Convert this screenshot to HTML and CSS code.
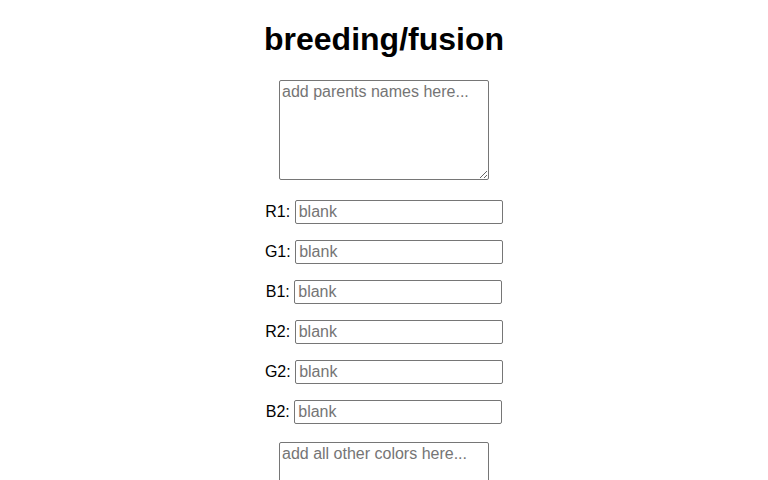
FILE: index.html
```html
<!DOCTYPE html>
<html lang="en">
<head>
<meta charset="utf-8">
<title>breeding/fusion</title>
<link rel="stylesheet" href="styles.css">
</head>
<body>
<h1 class="title">breeding/fusion</h1>
<div class="block">
  <textarea class="area" placeholder="add parents names here..."></textarea>
</div>
<p class="row"><label for="r1">R1:</label> <input id="r1" class="field" type="text" placeholder="blank"></p>
<p class="row"><label for="g1">G1:</label> <input id="g1" class="field" type="text" placeholder="blank"></p>
<p class="row"><label for="b1">B1:</label> <input id="b1" class="field" type="text" placeholder="blank"></p>
<p class="row"><label for="r2">R2:</label> <input id="r2" class="field" type="text" placeholder="blank"></p>
<p class="row"><label for="g2">G2:</label> <input id="g2" class="field" type="text" placeholder="blank"></p>
<p class="row"><label for="b2">B2:</label> <input id="b2" class="field" type="text" placeholder="blank"></p>
<div class="block block-last">
  <textarea class="area" placeholder="add all other colors here..."></textarea>
</div>
</body>
</html>
```
FILE: styles.css
```css
body {
  margin: 0 8px 8px;
  font-family: "Liberation Sans", Arial, sans-serif;
  font-size: 16px;
  color: #000;
  background: #fff;
  text-align: center;
}

.title {
  font-size: 32px;
  font-weight: bold;
  margin: 21.44px 0;
}

.block {
  height: 104px;
}

.block-last {
  margin-top: 18px;
}

.area {
  box-sizing: border-box;
  width: 210px;
  height: 100px;
  padding: 2px;
  border: 1px solid #767676;
  border-radius: 2px;
  font-family: "Liberation Sans", Arial, sans-serif;
  font-size: 16px;
  line-height: normal;
  vertical-align: top;
  margin: 0;
}

.row {
  margin: 16px 0;
  height: 24px;
  line-height: 24px;
}

.field {
  box-sizing: border-box;
  width: 208px;
  height: 24px;
  padding: 1px 3px;
  border: 1px solid #767676;
  border-radius: 2px;
  font-family: "Liberation Sans", Arial, sans-serif;
  font-size: 16px;
  vertical-align: top;
  margin: 0;
}

.area::placeholder,
.field::placeholder {
  color: #757575;
}
```
